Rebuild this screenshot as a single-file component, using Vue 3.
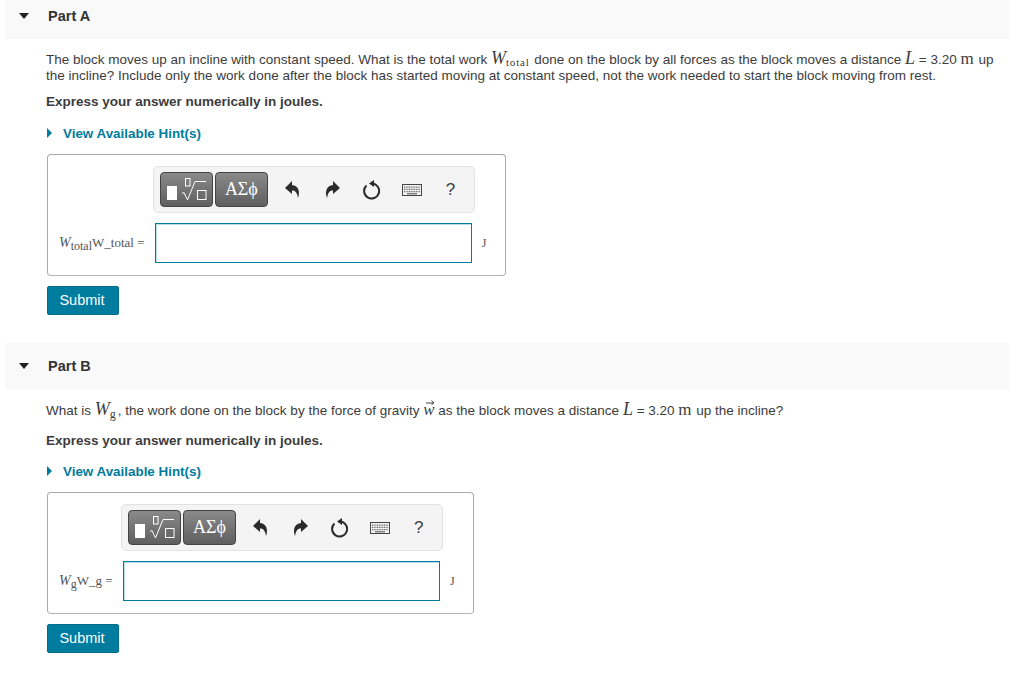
<script setup>
const parts = [
  { name: 'Part A', symbol: 'W', sub: 'total', raw: 'W_total', first: true },
  { name: 'Part B', symbol: 'W', sub: 'g', raw: 'W_g', first: false }
]
</script>

<template>
  <main class="page">
    <section v-for="part in parts" :key="part.name" class="part" :class="{ first: part.first }">
      <header class="part-head">
        <span class="caret-down"></span>
        <span class="part-name">{{ part.name }}</span>
      </header>

      <div class="part-body">
        <p v-if="part.first" class="question">
          The block moves up an incline with constant speed. What is the total work
          <span class="math big">W</span><span class="msub wide">total</span>
          done on the block by all forces as the block moves a distance
          <span class="math big">L</span> = 3.20 <span class="unit-m">m</span> up
          the incline? Include only the work done after the block has started moving at constant speed, not the work needed to start the block moving from rest.
        </p>
        <p v-else class="question">
          What is <span class="math big">W</span><span class="msub">g</span>, the work done on the block by the force of gravity
          <span class="vec">
            <svg class="arrow" width="10" height="6" viewBox="0 0 10 6">
              <path d="M1 4h8M6.500 1.500L9 4 6.500 5.500" fill="none" stroke="#444" stroke-width="1" />
            </svg>
            <span class="math">w</span>
          </span>
          as the block moves a distance <span class="math big">L</span> = 3.20 <span class="unit-m">m</span> up the incline?
        </p>

        <p class="instruction">Express your answer numerically in joules.</p>

        <div class="hint">
          <span class="caret-right"></span>
          <span>View Available Hint(s)</span>
        </div>

        <div class="answer-box">
          <div class="label-cell">
            <span class="label-symbol">{{ part.symbol }}</span><span class="label-sub">{{ part.sub }}</span><span>{{ part.raw }} =</span>
          </div>
          <div class="answer-col">
            <div class="toolbar">
              <button class="tool-btn templates">
                <svg width="51" height="33" viewBox="0 0 51 33">
                  <rect x="6" y="13" width="10" height="14" fill="#fff" />
                  <rect x="24.500" y="5.500" width="4.500" height="7.500" fill="none" stroke="#fff" />
                  <path d="M21 20.500l2-1 3.500 7.500L34 8.500h11" fill="none" stroke="#fff" />
                  <rect x="36.500" y="17.500" width="8.500" height="9" fill="none" stroke="#fff" />
                </svg>
              </button>
              <button class="tool-btn symbols">&#913;&#931;&#981;</button>
              <span class="tool-icons">
                <svg width="16" height="18" viewBox="0 0 16 18" class="undo">
                  <path d="M7 0L0 7l7 6V9.500c3 0 5 1.500 6 7.500 2.500-7 0-12.500-6-13z" fill="#2b2b2b" />
                </svg>
                <svg width="16" height="18" viewBox="0 0 16 18" class="redo">
                  <path d="M9 0l7 7-7 6V9.500c-3 0-5 1.500-6 7.500C.5 10 3 4.500 9 4z" fill="#2b2b2b" />
                </svg>
                <svg width="18" height="20" viewBox="0 0 18 20" class="reset">
                  <path d="M4.500 5.500A7.500 7.500 0 1 0 10 3.500" fill="none" stroke="#2b2b2b" stroke-width="2" />
                  <path d="M12 0v7L7 3.500z" fill="#2b2b2b" />
                </svg>
                <svg width="20" height="12" viewBox="0 0 20 12" class="keyboard">
                  <rect x=".5" y=".5" width="19" height="11" fill="#f2f2f2" stroke="#444" />
                  <path d="M2 3.200h16M2 5.400h16M2 7.600h16" stroke="#666" stroke-width="1.200" stroke-dasharray="1 .7" />
                  <path d="M5 9.800h10" stroke="#666" stroke-width="1.200" />
                </svg>
                <span class="help">?</span>
              </span>
            </div>
            <div class="input-row">
              <div class="answer-input"></div>
              <span class="unit">J</span>
            </div>
          </div>
        </div>

        <button class="submit">Submit</button>
      </div>
    </section>
  </main>
</template>

<style scoped>
.page {
  width: 1024px;
  font-family: "Liberation Sans", Arial, sans-serif;
  color: #3c3c3c;
}

.part-head {
  display: flex;
  align-items: center;
  height: 46px;
  margin: 0 15px 0 5px;
  background: #f9f9f9;
  color: #333;
  font-size: 14px;
}

.part.first .part-head {
  height: 39px;
  padding-bottom: 8px;
  box-sizing: border-box;
}

.caret-down {
  width: 0;
  height: 0;
  margin-left: 14px;
  border-left: 5.500px solid transparent;
  border-right: 5.500px solid transparent;
  border-top: 6px solid #222;
}

.part-name {
  margin-left: 19px;
  font-weight: 700;
  font-size: 14.500px;
}

.part-body {
  padding: 13px 15px 28px 46px;
}

.part.first .part-body {
  padding-top: 12px;
}

.question {
  margin: 0;
  font-size: 13.500px;
  line-height: 16px;
}

.part:not(.first) .question {
  line-height: 18px;
}

.math {
  font-family: "Liberation Serif", serif;
  font-style: italic;
  font-size: 17px;
  line-height: 14px;
}

.math.big {
  font-size: 18px;
}

.msub {
  margin-right: 2px;
  font-family: "Liberation Serif", serif;
  font-size: 12px;
  line-height: 10px;
  vertical-align: -3px;
}

.msub.wide {
  margin-right: 1px;
  font-size: 11px;
  letter-spacing: 0.800px;
  vertical-align: -2px;
}

.unit-m {
  font-family: "Liberation Serif", serif;
  font-size: 17px;
  line-height: 14px;
  letter-spacing: 1px;
}

.vec {
  position: relative;
  display: inline-block;
  line-height: 14px;
}

.arrow {
  position: absolute;
  left: 2px;
  top: -4px;
}

.instruction {
  margin: 10px 0 0;
  font-size: 13.500px;
  font-weight: 700;
  line-height: 16px;
}

.part:not(.first) .instruction {
  margin-top: 13px;
}

.hint {
  display: flex;
  align-items: center;
  gap: 11px;
  height: 16px;
  margin-top: 15px;
  color: #007c9e;
  font-size: 13.400px;
  font-weight: 700;
}

.part:not(.first) .hint {
  margin-top: 14px;
}

.caret-right {
  width: 0;
  height: 0;
  margin-left: 1px;
  border-top: 5.500px solid transparent;
  border-bottom: 5.500px solid transparent;
  border-left: 5px solid #007c9e;
}

.answer-box {
  display: flex;
  width: fit-content;
  box-sizing: border-box;
  height: 122px;
  margin-top: 13px;
  margin-left: 1px;
  padding: 11px 33px 0 11px;
  border: 1px solid #a9a9a9;
  border-bottom-color: #b5b5b5;
  border-radius: 4px;
}

.label-cell {
  display: flex;
  align-items: baseline;
  margin-top: 69px;
  padding-right: 10.400px;
  font-family: "Liberation Serif", serif;
  font-size: 13px;
  color: #555;
  white-space: nowrap;
  height: 20px;
}

.label-symbol {
  font-style: italic;
  font-size: 14px;
}

.label-sub {
  position: relative;
  top: 3px;
  font-size: 12px;
}

.answer-col {
  position: relative;
  width: 317px;
}

.toolbar {
  display: flex;
  align-items: center;
  box-sizing: border-box;
  width: 322px;
  height: 47px;
  margin-left: -2px;
  padding-left: 6px;
  background: #f4f4f4;
  border: 1px solid #e2e2e2;
  border-radius: 5px;
}

.tool-btn {
  display: flex;
  align-items: center;
  justify-content: center;
  height: 35px;
  padding: 0;
  color: #fff;
  background: linear-gradient(#8a8a8a, #5f5f5f);
  border: 1px solid #444;
  border-radius: 4px;
}

.templates {
  width: 53px;
}

.symbols {
  width: 53px;
  margin-left: 2px;
  font-family: "Liberation Serif", serif;
  font-size: 18px;
}

.tool-icons {
  display: flex;
  align-items: center;
  margin-left: 17px;
}

.redo {
  margin-left: 23px;
}

.reset {
  margin-left: 22px;
}

.keyboard {
  margin-left: 22px;
}

.help {
  margin-left: 24px;
  font-size: 17px;
  color: #3c3c3c;
}

.input-row {
  display: flex;
  align-items: center;
  margin-top: 10px;
}

.answer-input {
  flex: none;
  box-sizing: border-box;
  width: 317px;
  height: 40px;
  background: #fff;
  border: 1px solid #007c9e;
  box-shadow: inset 1px 1px 0 #bcdde6;
}

.unit {
  margin-left: 10px;
  font-family: "Liberation Serif", serif;
  font-size: 12px;
  color: #555;
}

.submit {
  display: block;
  width: 72px;
  height: 29px;
  margin-top: 10px;
  margin-left: 1px;
  padding: 0 2px 2px 0;
  color: #fff;
  background: #007c9e;
  border: 1px solid #006d8c;
  border-radius: 2px;
  font-family: "Liberation Sans", Arial, sans-serif;
  font-size: 14.500px;
}
</style>

<style>
html,
body {
  margin: 0;
  background: #fff;
}
</style>
